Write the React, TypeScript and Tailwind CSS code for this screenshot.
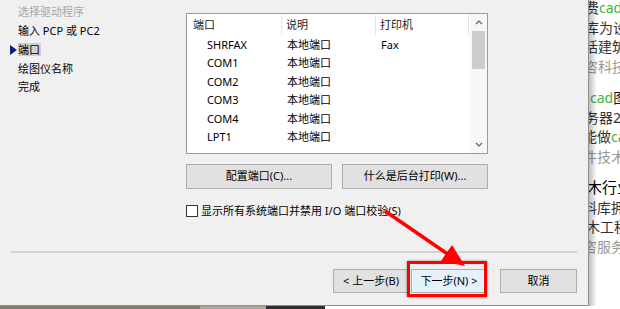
import React from "react";

const ports = [
  { name: "SHRFAX", desc: "本地端口", printer: "Fax" },
  { name: "COM1", desc: "本地端口", printer: "" },
  { name: "COM2", desc: "本地端口", printer: "" },
  { name: "COM3", desc: "本地端口", printer: "" },
  { name: "COM4", desc: "本地端口", printer: "" },
  { name: "LPT1", desc: "本地端口", printer: "" },
];

const steps = ["选择驱动程序", "输入 PCP 或 PC2", "端口", "绘图仪名称", "完成"];

const WinButton = ({
  children,
  className = "",
}: {
  children: React.ReactNode;
  className?: string;
}) => (
  <div
    className={`flex items-center justify-center border border-[#adadad] bg-[#e1e1e1] text-black ${className}`}
  >
    {children}
  </div>
);

const Chevron = ({ up }: { up?: boolean }) => (
  <svg width="8" height="5" viewBox="0 0 8 5">
    <polyline
      points={up ? "1,4 4,1 7,4" : "1,1 4,4 7,1"}
      fill="none"
      stroke="#606060"
      strokeWidth="1.2"
    />
  </svg>
);

// lines of the web page peeking out behind the dialog
const pageGroups = [
  [
    { t: <>费<span className="text-[#3fb33a]">cad</span></>, cls: "ml-[-4px] text-[#333]" },
    { t: "库为设", cls: "ml-[-4px] text-[#333]" },
    { t: "括建筑", cls: "ml-[-5px] text-[#333]" },
    { t: "咨科技", cls: "ml-[-5px] text-[#999]" },
  ],
  [
    { t: <><span className="text-[#3fb33a]">cad</span>图</>, cls: "ml-[1px] text-[#111]" },
    { t: "务器20", cls: "ml-[-4px] text-[#333]" },
    { t: <>能做<span className="text-[#3fb33a]">cad</span></>, cls: "ml-[-6px] text-[#333]" },
    { t: "件技术", cls: "ml-[-6px] text-[#999]" },
  ],
  [
    { t: "木行业", cls: "ml-[-2px] text-[15px] text-black" },
    { t: "料库拥", cls: "ml-[-6px] text-[#333]" },
    { t: "木工程", cls: "ml-[-3px] text-[#333]" },
    { t: "咨服务", cls: "ml-[-6px] text-[#999]" },
  ],
];

export default function App() {
  return (
    <div className="relative w-[620px] h-[309px] overflow-hidden bg-white font-['Noto_Sans','Noto_Sans_CJK_SC',sans-serif] text-[11px]">
      <div className="flex h-[306px]">
        {/* dialog */}
        <div className="w-[589px] shrink-0 flex flex-col bg-[#f0f0f0] border-r border-b border-[#8f8f8f]">
          <div className="flex">
            <div className="w-[186px] pt-[3px] pl-[10px] flex flex-col">
              {steps.map((s, i) => (
                <div key={s} className="flex items-center h-[18.8px]">
                  <div className="w-[8px] flex items-center">
                    {i === 2 && (
                      <svg width="7" height="10" viewBox="0 0 7 10">
                        <polygon points="0,0 7,5 0,10" fill="#0a1a8a" />
                      </svg>
                    )}
                  </div>
                  <span
                    className={
                      i === 0
                        ? "text-[#a8a8a8]"
                        : i === 2
                        ? "bg-[#cfcfcf] text-black leading-[13px] pr-[1px]"
                        : "text-black"
                    }
                  >
                    {s}
                  </span>
                </div>
              ))}
            </div>

            <div className="flex flex-col pt-[13px]">
              {/* list view */}
              <div className="w-[302px] h-[141px] flex border border-[#9a9a9a] bg-white">
                <div className="flex-1 flex flex-col">
                  <div className="flex h-[22px] items-center text-[#1a1a1a]">
                    <div className="w-[95px] pl-[6px] border-r border-[#e5e5e5] h-[20px] flex items-center">端口</div>
                    <div className="w-[94px] pl-[4px] border-r border-[#e5e5e5] h-[20px] flex items-center">说明</div>
                    <div className="w-[93px] pl-[4px] border-r border-[#e5e5e5] h-[20px] flex items-center">打印机</div>
                  </div>
                  {ports.map((p) => (
                    <div key={p.name} className="flex h-[18.4px] items-center text-black">
                      <div className="w-[95px] pl-[20px]">{p.name}</div>
                      <div className="w-[94px] pl-[5px]">{p.desc}</div>
                      <div className="w-[93px] pl-[5px]">{p.printer}</div>
                    </div>
                  ))}
                </div>
                <div className="w-[17px] flex flex-col bg-[#f7f7f7]">
                  <div className="h-[17px] flex items-center justify-center">
                    <Chevron up />
                  </div>
                  <div className="mx-[2px] h-[38px] bg-[#cdcdcd]" />
                  <div className="flex-1" />
                  <div className="h-[17px] flex items-center justify-center">
                    <Chevron />
                  </div>
                </div>
              </div>

              <div className="flex gap-[10px] mt-[10px] h-[25px]">
                <WinButton className="w-[146px]">配置端口(C)...</WinButton>
                <WinButton className="w-[146px]">什么是后台打印(W)...</WinButton>
              </div>

              <div className="flex items-center gap-[3px] mt-[15px] h-[13px]">
                <div className="w-[12px] h-[12px] border border-[#333] bg-white" />
                <span className="text-black leading-[13px]">显示所有系统端口并禁用 I/O 端口校验(S)</span>
              </div>
            </div>
          </div>

          <div className="ml-[11px] mt-[34px] w-[566px] h-[2px] bg-[#d3d3d3]" />

          <div className="flex justify-end pr-[11px] mt-[16px] h-[24px]">
            <WinButton className="w-[76px]">&lt; 上一步(B)</WinButton>
            <WinButton className="w-[76px] ml-[2px] border-[#0078d7] bg-[#e5f1fb]">下一步(N) &gt;</WinButton>
            <WinButton className="w-[77px] ml-[13px]">取消</WinButton>
          </div>
        </div>

        {/* web page behind the dialog */}
        <div className="relative flex-1 overflow-hidden">
          <div className="flex flex-col gap-[12px] -mt-[2px]">
            {pageGroups.map((g, gi) => (
              <div key={gi} className="flex flex-col">
                {g.map((l, li) => (
                  <div key={li} className={`h-[19.5px] leading-[19.5px] text-[14px] whitespace-nowrap ${l.cls}`}>
                    {l.t}
                  </div>
                ))}
              </div>
            ))}
          </div>
          <div className="absolute inset-y-0 left-0 w-[8px] bg-linear-to-r from-black/25 to-transparent" />
        </div>
      </div>

      <div className="flex h-[3px]">
        <div className="w-[200px] bg-[#837d76]" />
        <div className="w-[66px] bg-[#aaa59f]" />
        <div className="w-[59px] bg-[#2e2e2e]" />
        <div className="flex-1 bg-white" />
      </div>

      {/* annotation: red box and arrow */}
      <div className="absolute left-[407px] top-[261px] w-[80px] h-[36px] border-[3px] border-[#ff0000] shadow-[0_0_2px_rgba(80,0,0,0.6)]" />
      <svg className="absolute left-0 top-0 pointer-events-none" width="620" height="309">
        <line x1="385" y1="211" x2="449" y2="255" stroke="#ff0000" strokeWidth="3.5" />
        <polygon points="465,266 441,261 452,245" fill="#ff0000" />
      </svg>
    </div>
  );
}
